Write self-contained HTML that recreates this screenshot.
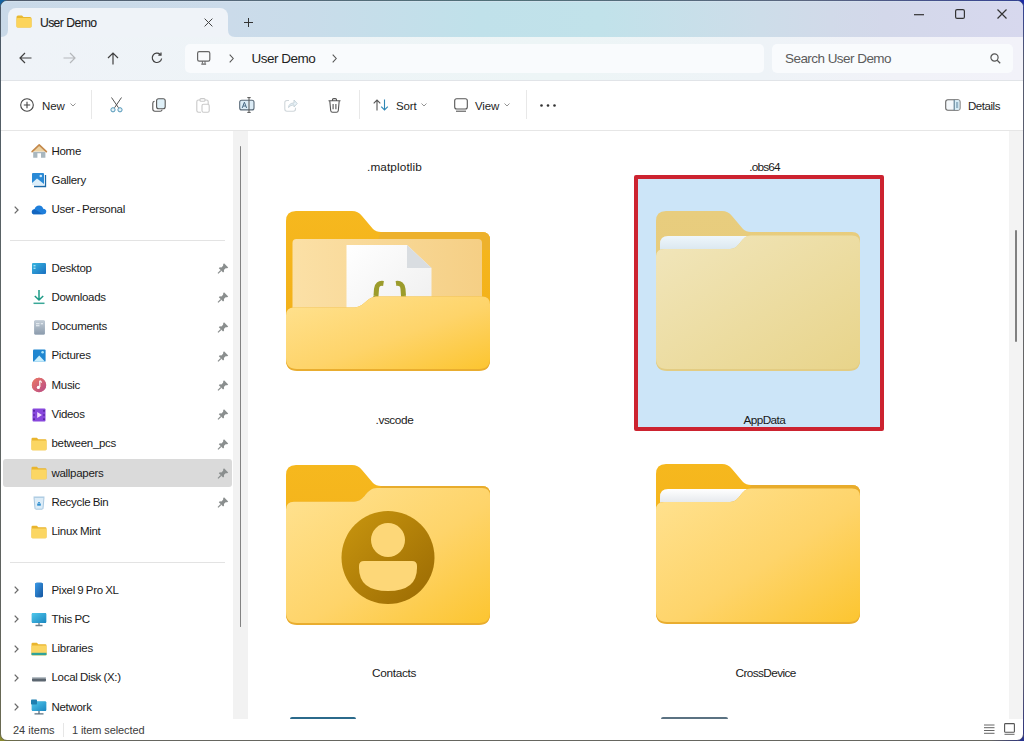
<!DOCTYPE html>
<html><head><meta charset="utf-8">
<style>
*{margin:0;padding:0;box-sizing:border-box}
html,body{width:1024px;height:741px;overflow:hidden;background:#fff;font-family:"Liberation Sans",sans-serif;color:#1b1b1b}
.a{position:absolute}
svg{position:absolute;overflow:visible}
#win{position:absolute;left:0;top:0;width:1024px;height:741px;overflow:hidden;background:#fff}
#title{left:0;top:0;width:1024px;height:37px;background:linear-gradient(90deg,#c9d9e8 0px,#cbdbea 230px,#c9dcea 300px,#c0e1ea 480px,#c1e2ea 600px,#cddde9 760px,#d1dae9 830px,#d3d8ea 885px,#d7d8ee 1024px)}
#tab{left:8px;top:8px;width:220px;height:30px;background:#eff3f8;border-radius:8px 8px 0 0}
#nav{left:0;top:37px;width:1024px;height:43px;background:linear-gradient(90deg,#eff3f8 0px,#eef4f7 300px,#edf5f6 560px,#eef3f7 760px,#f1f2f8 900px,#f2f2f9 1024px)}
#addr{left:184.5px;top:44px;width:579.5px;height:29px;background:#f9fbfd;border-radius:5px}
#search{left:772px;top:44px;width:241px;height:29px;background:#f9fbfd;border-radius:5px}
#cmd{left:0;top:80px;width:1024px;height:51px;background:#fff;border-top:1px solid #e1e4e8;border-bottom:1px solid #e6e6e6}
.t{position:absolute;white-space:nowrap;line-height:1}
.sb{font-size:11.5px;letter-spacing:-0.3px;word-spacing:-0.5px;color:#1a1a1a}
.lbl{font-size:11.8px;color:#1a1a1a}
.sep{position:absolute;width:1px;background:#e8e8e8}
.bd{position:absolute;background:#4f5a64}
</style></head><body>
<div id="win">
  <div id="title" class="a"></div>
  <div id="tab" class="a"></div>
  <svg style="left:228px;top:30px" width="8" height="7" viewBox="0 0 8 7"><path d="M0 0 V7 H7 Q0 7 0 0 Z" fill="#eff3f8"/></svg>
  <svg style="left:0px;top:30px" width="8" height="7" viewBox="0 0 8 7"><path d="M8 0 V7 H1 Q8 7 8 0 Z" fill="#eff3f8"/></svg>
  <!-- tab folder icon -->
  <svg style="left:16px;top:15px" width="16" height="13" viewBox="0 0 16 13">
    <path d="M0.5 2 Q0.5 0.5 2 0.5 H6 L7.5 2 H14 Q15.5 2 15.5 3.5 V11.5 Q15.5 12.5 14 12.5 H2 Q0.5 12.5 0.5 11 Z" fill="#e8b830"/>
    <path d="M0.5 4 Q0.5 3 2 3 H14 Q15.5 3 15.5 4.5 V11.2 Q15.5 12.5 14 12.5 H2 Q0.5 12.5 0.5 11.2 Z" fill="#fcd45a"/>
  </svg>
  <div class="t" style="left:40px;top:16.8px;font-size:12.2px;letter-spacing:-0.65px;word-spacing:0.5px;color:#1a1a1a;-webkit-text-stroke:0.1px #1a1a1a">User Demo</div>
  <svg style="left:204px;top:18px" width="9" height="9" viewBox="0 0 9 9"><path d="M0.6 0.6 L8.4 8.4 M8.4 0.6 L0.6 8.4" stroke="#444" stroke-width="1"/></svg>
  <svg style="left:244px;top:18px" width="9" height="9" viewBox="0 0 9 9"><path d="M4.5 0 V9 M0 4.5 H9" stroke="#333" stroke-width="1"/></svg>
  <!-- window controls -->
  <svg style="left:914px;top:13.5px" width="10" height="2" viewBox="0 0 10 2"><path d="M0 0.7 H10" stroke="#333" stroke-width="1.2"/></svg>
  <svg style="left:955px;top:9px" width="10" height="10" viewBox="0 0 10 10"><rect x="0.6" y="0.6" width="8.8" height="8.8" rx="1.5" fill="none" stroke="#333" stroke-width="1.2"/></svg>
  <svg style="left:997px;top:9px" width="10" height="10" viewBox="0 0 10 10"><path d="M0.5 0.5 L9.5 9.5 M9.5 0.5 L0.5 9.5" stroke="#333" stroke-width="1.2"/></svg>

  <div id="nav" class="a"></div>
  <div id="addr" class="a"></div>
  <div id="search" class="a"></div>
  <!-- nav buttons -->
  <svg style="left:19px;top:52px" width="13" height="12" viewBox="0 0 13 12"><path d="M12.5 6 H1 M6 1 L1 6 L6 11" fill="none" stroke="#404040" stroke-width="1.2"/></svg>
  <svg style="left:63px;top:52px" width="13" height="12" viewBox="0 0 13 12"><path d="M0.5 6 H12 M7 1 L12 6 L7 11" fill="none" stroke="#b5b8bb" stroke-width="1.2"/></svg>
  <svg style="left:107px;top:52px" width="12" height="13" viewBox="0 0 12 13"><path d="M6 12.5 V1 M1 6 L6 1 L11 6" fill="none" stroke="#404040" stroke-width="1.2"/></svg>
  <svg style="left:151px;top:52px" width="12" height="12" viewBox="0 0 12 12"><path d="M10.6 6.5 A4.7 4.7 0 1 1 9.2 2.4 M10 0.5 V3.2 H7.3" fill="none" stroke="#404040" stroke-width="1.2"/></svg>
  <!-- address content -->
  <svg style="left:197px;top:51px" width="14" height="14" viewBox="0 0 14 14"><rect x="0.6" y="0.6" width="12.2" height="9.6" rx="1.6" fill="none" stroke="#666" stroke-width="1.2"/><path d="M4.3 13.1 H9.1" stroke="#666" stroke-width="1.3"/><path d="M5.4 10.2 V12.6 M8 10.2 V12.6" stroke="#666" stroke-width="1"/></svg>
  <svg style="left:229px;top:54px" width="5" height="9" viewBox="0 0 5 9"><path d="M0.7 0.7 L4.2 4.5 L0.7 8.3" fill="none" stroke="#555" stroke-width="1.1"/></svg>
  <div class="t" style="left:251.5px;top:51.9px;font-size:13.5px;letter-spacing:-0.5px;word-spacing:0px;color:#1f1f1f">User Demo</div>
  <svg style="left:332px;top:54px" width="5" height="9" viewBox="0 0 5 9"><path d="M0.7 0.7 L4.2 4.5 L0.7 8.3" fill="none" stroke="#555" stroke-width="1.1"/></svg>
  <div class="t" style="left:785px;top:52.4px;font-size:13.5px;letter-spacing:-0.55px;word-spacing:0px;color:#5c5c5c">Search User Demo</div>
  <svg style="left:990px;top:53px" width="11" height="11" viewBox="0 0 11 11"><circle cx="4.5" cy="4.5" r="3.6" fill="none" stroke="#555" stroke-width="1.2"/><path d="M7.2 7.2 L10.2 10.2" stroke="#555" stroke-width="1.3"/></svg>

  <div id="cmd" class="a"></div>
  <!-- command bar -->
  <svg style="left:20px;top:98px" width="14" height="14" viewBox="0 0 14 14"><circle cx="7" cy="7" r="6.3" fill="none" stroke="#444" stroke-width="1.1"/><path d="M7 3.8 V10.2 M3.8 7 H10.2" stroke="#444" stroke-width="1.1"/></svg>
  <div class="t" style="left:42px;top:100.8px;font-size:11.5px;letter-spacing:-0.1px;color:#1f1f1f">New</div>
  <svg style="left:70px;top:103px" width="6" height="4" viewBox="0 0 6 4"><path d="M0.5 0.5 L3 3 L5.5 0.5" fill="none" stroke="#888" stroke-width="0.9"/></svg>
  <div class="sep" style="left:91px;top:90px;height:29px"></div>
  <!-- cut -->
  <svg style="left:110px;top:97px" width="13" height="16" viewBox="0 0 13 16"><path d="M1.5 0.5 L8.5 10.8 M11.5 0.5 L4.5 10.8" stroke="#555" stroke-width="1" fill="none"/><circle cx="3" cy="12.8" r="2.1" fill="#e6f2f8" stroke="#5096b8" stroke-width="1"/><circle cx="10" cy="12.8" r="2.1" fill="#e6f2f8" stroke="#5096b8" stroke-width="1"/></svg>
  <!-- copy -->
  <svg style="left:152px;top:98px" width="14" height="14" viewBox="0 0 14 14"><path d="M2.5 3.2 Q0.8 3.5 0.8 5.2 V11 Q0.8 13.2 3 13.2 H8.2 Q9.8 13.2 10.2 11.6" fill="none" stroke="#555" stroke-width="1.1"/><rect x="4.6" y="0.7" width="8.6" height="10" rx="2" fill="#dff0f8" stroke="#555" stroke-width="1.1"/></svg>
  <!-- paste disabled -->
  <svg style="left:196px;top:98px" width="14" height="15" viewBox="0 0 14 15"><path d="M4 2 H2.5 Q0.8 2 0.8 3.8 V12.5 Q0.8 14.2 2.5 14.2 H5" fill="none" stroke="#c9c9c9" stroke-width="1.1"/><rect x="4" y="0.6" width="5" height="2.6" rx="1" fill="none" stroke="#c9c9c9" stroke-width="1.1"/><path d="M9 2 H10.5 Q12.2 2 12.2 3.8 V6" fill="none" stroke="#c9c9c9" stroke-width="1.1"/><rect x="6" y="6.2" width="7.2" height="8" rx="1.5" fill="none" stroke="#c9c9c9" stroke-width="1.1"/></svg>
  <!-- rename -->
  <svg style="left:239px;top:97px" width="16" height="16" viewBox="0 0 16 16"><rect x="0.7" y="3.3" width="14.3" height="9.6" rx="2" fill="#dcecf6" stroke="#5a6a78" stroke-width="1.1"/><path d="M3.2 11 L5.4 5.2 L7.6 11 M4 9 H6.8" fill="none" stroke="#4a6b85" stroke-width="1"/><path d="M10 0.6 V15.4 M8.3 0.6 H11.7 M8.3 15.4 H11.7" stroke="#555" stroke-width="1"/></svg>
  <!-- share disabled -->
  <svg style="left:284px;top:99px" width="14" height="13" viewBox="0 0 14 13"><path d="M5 1.5 H3 Q0.8 1.5 0.8 3.7 V10 Q0.8 12.2 3 12.2 H9.3 Q11.5 12.2 11.5 10 V8.8" fill="none" stroke="#cfd6da" stroke-width="1.1"/><path d="M4.5 8.5 Q5 4 10 4 V1 L13.2 4.5 L10 8 V5.8 Q6.5 5.8 4.5 8.5 Z" fill="#e8f2f8" stroke="#c8d4da" stroke-width="1"/></svg>
  <!-- delete -->
  <svg style="left:328px;top:98px" width="13" height="15" viewBox="0 0 13 15"><path d="M0.5 2.8 H12.5 M4.5 2.8 V1.8 Q4.5 0.6 5.7 0.6 H7.3 Q8.5 0.6 8.5 1.8 V2.8" fill="none" stroke="#555" stroke-width="1.1"/><path d="M1.8 3 L2.7 12.5 Q2.9 14.3 4.6 14.3 H8.4 Q10.1 14.3 10.3 12.5 L11.2 3" fill="none" stroke="#555" stroke-width="1.1"/><path d="M5.1 6 V11.2 M7.9 6 V11.2" stroke="#555" stroke-width="1.1"/></svg>
  <div class="sep" style="left:359px;top:90px;height:29px"></div>
  <!-- sort -->
  <svg style="left:373px;top:99px" width="16" height="12" viewBox="0 0 16 12"><path d="M4 11.5 V1 M0.7 4.3 L4 1 L7.3 4.3" fill="none" stroke="#555" stroke-width="1.1"/><path d="M11.5 0.5 V11 M8.2 7.7 L11.5 11 L14.8 7.7" fill="none" stroke="#2f87b5" stroke-width="1.1"/></svg>
  <div class="t" style="left:396px;top:100.8px;font-size:11.5px;letter-spacing:-0.1px;color:#1f1f1f">Sort</div>
  <svg style="left:421px;top:103px" width="6" height="4" viewBox="0 0 6 4"><path d="M0.5 0.5 L3 3 L5.5 0.5" fill="none" stroke="#888" stroke-width="0.9"/></svg>
  <!-- view -->
  <svg style="left:454px;top:98px" width="14" height="14" viewBox="0 0 14 14"><rect x="0.7" y="0.7" width="12.6" height="10.3" rx="2" fill="none" stroke="#555" stroke-width="1.1"/><path d="M2 13.2 H12" stroke="#555" stroke-width="1.1"/></svg>
  <div class="t" style="left:475px;top:100.8px;font-size:11.5px;letter-spacing:-0.1px;color:#1f1f1f">View</div>
  <svg style="left:504px;top:103px" width="6" height="4" viewBox="0 0 6 4"><path d="M0.5 0.5 L3 3 L5.5 0.5" fill="none" stroke="#888" stroke-width="0.9"/></svg>
  <div class="sep" style="left:526px;top:90px;height:29px"></div>
  <svg style="left:540px;top:104px" width="16" height="3" viewBox="0 0 16 3"><circle cx="1.5" cy="1.5" r="1.3" fill="#333"/><circle cx="8" cy="1.5" r="1.3" fill="#333"/><circle cx="14.5" cy="1.5" r="1.3" fill="#333"/></svg>
  <!-- details -->
  <svg style="left:945px;top:99px" width="16" height="12" viewBox="0 0 16 12"><rect x="0.7" y="0.7" width="14.3" height="10.6" rx="2.2" fill="#f4f8fb" stroke="#666" stroke-width="1.1"/><rect x="9.2" y="1.2" width="5.3" height="9.6" fill="#d6ecf6"/><path d="M9.2 0.7 V11.3" stroke="#5b7d90" stroke-width="1.1"/><path d="M11 4 H13.2 M11 6 H13.2 M11 8 H13.2" stroke="#4a7590" stroke-width="0.9"/></svg>
  <div class="t" style="left:968px;top:100.8px;font-size:11.5px;letter-spacing:-0.45px;color:#1f1f1f">Details</div>
<svg width="0" height="0" style="left:0;top:0"><defs><linearGradient id="gd" x1="0" y1="0" x2="1" y2="1"><stop offset="0" stop-color="#38b6e0"/><stop offset="1" stop-color="#1a6fc0"/></linearGradient><linearGradient id="gdoc" x1="0" y1="0" x2="0" y2="1"><stop offset="0" stop-color="#c2ccd6"/><stop offset="1" stop-color="#8c9cad"/></linearGradient><linearGradient id="gmus" x1="0" y1="0" x2="1" y2="1"><stop offset="0" stop-color="#ee7a62"/><stop offset="1" stop-color="#b54a8a"/></linearGradient><linearGradient id="gph" x1="0" y1="0" x2="1" y2="1"><stop offset="0" stop-color="#3b9be8"/><stop offset="1" stop-color="#14559e"/></linearGradient><linearGradient id="gpc" x1="0" y1="0" x2="1" y2="1"><stop offset="0" stop-color="#50c8ec"/><stop offset="1" stop-color="#1a86c0"/></linearGradient></defs></svg>
<div class="a" style="left:233px;top:131px;width:15px;height:588px;background:#f2f2f2"></div>
<div class="a" style="left:239.7px;top:146px;width:1.6px;height:481px;background:#828282;border-radius:1px"></div>
<div class="a" style="left:3px;top:459.0px;width:229px;height:28px;background:#dadada;border-radius:3px"></div>
<svg style="left:31px;top:143.1px" width="16" height="16" viewBox="0 0 16 16"><path d="M2.2 8.8 H14.4 V14.8 H10 V10.2 H6.4 V14.8 H2.2 Z" fill="#a9b7bf"/><path d="M1.8 8.6 L8.2 2.6 L14.6 8.6 Z" fill="#ecd2a2"/><path d="M1.1 8.6 L8.2 1.8 L15.4 8.6" fill="none" stroke="#c4884a" stroke-width="1.6" stroke-linejoin="round" stroke-linecap="round"/></svg>
<div class="t sb" style="left:51.5px;top:145.5px">Home</div>
<svg style="left:31px;top:172.4px" width="16" height="16" viewBox="0 0 16 16"><rect x="1" y="1" width="12" height="12" rx="1" fill="#2a8ad6"/><path d="M1 11 L6 6.5 L13 12 V13 H1 Z" fill="#dbeefa"/><circle cx="9.8" cy="4" r="1.3" fill="#cfe9fa"/><path d="M14.5 3 V14.5 H3" fill="none" stroke="#1c6aa8" stroke-width="1.3"/></svg>
<div class="t sb" style="left:51.5px;top:174.8px">Gallery</div>
<svg style="left:31px;top:201.6px" width="16" height="16" viewBox="0 0 16 16"><path d="M3.5 12.2 Q0.6 12.2 0.8 9.4 Q1.1 7.2 3.6 7.1 Q4.6 3.6 8.1 3.6 Q11.2 3.6 12.2 6.7 Q15.4 7 15.3 9.7 Q15.1 12.2 12.5 12.2 Z" fill="#1f7fdb"/><path d="M3.5 12.2 Q0.6 12.2 0.8 9.4 Q1.1 7.7 3.3 7.4 Q6 8.2 8 9.7 Q10 11.2 12.5 12.2 Z" fill="#1366c0"/></svg>
<div class="t sb" style="left:51.5px;top:204.0px;word-spacing:-1px">User - Personal</div>
<svg style="left:14px;top:205.6px" width="5" height="8" viewBox="0 0 5 8"><path d="M0.7 0.6 L4 4 L0.7 7.4" fill="none" stroke="#6a6a6a" stroke-width="1.3"/></svg>
<svg style="left:31px;top:260.2px" width="16" height="16" viewBox="0 0 16 16"><rect x="1" y="3" width="14" height="11" rx="1.5" fill="#1e88c8"/><rect x="1" y="3" width="14" height="11" rx="1.5" fill="url(#gd)"/><rect x="2.5" y="5" width="2" height="1.4" fill="#9fe0f5"/><rect x="2.5" y="7.6" width="2" height="1.4" fill="#9fe0f5"/></svg>
<div class="t sb" style="left:51.5px;top:262.6px">Desktop</div>
<svg style="left:217.3px;top:262.0px" width="12" height="12" viewBox="0 0 12 12"><path d="M7 1.2 L11.2 5.4 L10.2 6.2 L8.6 6.3 L6.9 8 L7.1 9.6 L6.1 10.6 L1.8 6.3 L2.8 5.3 L4.4 5.5 L6.1 3.8 L6.2 2.2 Z" fill="#8a8e8e"/><path d="M3.9 8.5 L1 11.4" stroke="#8a8e8e" stroke-width="1.2"/></svg>
<svg style="left:31px;top:289.4px" width="16" height="16" viewBox="0 0 16 16"><path d="M8 1 V11 M3.8 7 L8 11 L12.2 7" fill="none" stroke="#1d9a86" stroke-width="1.5"/><path d="M2.5 14.3 H13.5" stroke="#3aa898" stroke-width="1.5"/></svg>
<div class="t sb" style="left:51.5px;top:291.8px">Downloads</div>
<svg style="left:217.3px;top:291.2px" width="12" height="12" viewBox="0 0 12 12"><path d="M7 1.2 L11.2 5.4 L10.2 6.2 L8.6 6.3 L6.9 8 L7.1 9.6 L6.1 10.6 L1.8 6.3 L2.8 5.3 L4.4 5.5 L6.1 3.8 L6.2 2.2 Z" fill="#8a8e8e"/><path d="M3.9 8.5 L1 11.4" stroke="#8a8e8e" stroke-width="1.2"/></svg>
<svg style="left:31px;top:318.7px" width="16" height="16" viewBox="0 0 16 16"><rect x="3.3" y="1.6" width="10.5" height="13.8" rx="1" fill="#a3b2c2"/><rect x="3.3" y="1.6" width="10.5" height="13.8" rx="1" fill="url(#gdoc)"/><path d="M5 4.8 H8.5 M9.8 4.8 H12 M5 6.8 H8.5" stroke="#eef3f7" stroke-width="1.1"/></svg>
<div class="t sb" style="left:51.5px;top:321.1px">Documents</div>
<svg style="left:217.3px;top:320.5px" width="12" height="12" viewBox="0 0 12 12"><path d="M7 1.2 L11.2 5.4 L10.2 6.2 L8.6 6.3 L6.9 8 L7.1 9.6 L6.1 10.6 L1.8 6.3 L2.8 5.3 L4.4 5.5 L6.1 3.8 L6.2 2.2 Z" fill="#8a8e8e"/><path d="M3.9 8.5 L1 11.4" stroke="#8a8e8e" stroke-width="1.2"/></svg>
<svg style="left:31px;top:348.0px" width="16" height="16" viewBox="0 0 16 16"><rect x="2" y="1.6" width="12.6" height="12.2" rx="1" fill="#1f86d0"/><path d="M2.5 13.8 L8.2 7.6 L14.1 13.8 Z" fill="#c9eefc"/><circle cx="11.6" cy="4.2" r="1.3" fill="#a8e4fa"/></svg>
<div class="t sb" style="left:51.5px;top:350.4px">Pictures</div>
<svg style="left:217.3px;top:349.8px" width="12" height="12" viewBox="0 0 12 12"><path d="M7 1.2 L11.2 5.4 L10.2 6.2 L8.6 6.3 L6.9 8 L7.1 9.6 L6.1 10.6 L1.8 6.3 L2.8 5.3 L4.4 5.5 L6.1 3.8 L6.2 2.2 Z" fill="#8a8e8e"/><path d="M3.9 8.5 L1 11.4" stroke="#8a8e8e" stroke-width="1.2"/></svg>
<svg style="left:31px;top:377.3px" width="16" height="16" viewBox="0 0 16 16"><circle cx="8" cy="8" r="7.2" fill="#d7606a"/><circle cx="8" cy="8" r="7.2" fill="url(#gmus)"/><path d="M8.8 3.8 V10" stroke="#fff" stroke-width="1.2"/><circle cx="7.4" cy="10.4" r="1.6" fill="#fff"/><path d="M8.8 3.8 Q10.3 4.2 10.5 5.8" fill="none" stroke="#fff" stroke-width="1.1"/></svg>
<div class="t sb" style="left:51.5px;top:379.7px">Music</div>
<svg style="left:217.3px;top:379.1px" width="12" height="12" viewBox="0 0 12 12"><path d="M7 1.2 L11.2 5.4 L10.2 6.2 L8.6 6.3 L6.9 8 L7.1 9.6 L6.1 10.6 L1.8 6.3 L2.8 5.3 L4.4 5.5 L6.1 3.8 L6.2 2.2 Z" fill="#8a8e8e"/><path d="M3.9 8.5 L1 11.4" stroke="#8a8e8e" stroke-width="1.2"/></svg>
<svg style="left:31px;top:406.5px" width="16" height="16" viewBox="0 0 16 16"><rect x="1.5" y="1.5" width="13" height="13" rx="1" fill="#8747dc"/><path d="M6.2 5 L11 8 L6.2 11 Z" fill="#f2dcff"/><path d="M3 3.3 V4.5 M3 7.4 V8.6 M3 11.5 V12.7 M13 3.3 V4.5 M13 7.4 V8.6 M13 11.5 V12.7" stroke="#3c1480" stroke-width="1.6"/></svg>
<div class="t sb" style="left:51.5px;top:408.9px">Videos</div>
<svg style="left:217.3px;top:408.3px" width="12" height="12" viewBox="0 0 12 12"><path d="M7 1.2 L11.2 5.4 L10.2 6.2 L8.6 6.3 L6.9 8 L7.1 9.6 L6.1 10.6 L1.8 6.3 L2.8 5.3 L4.4 5.5 L6.1 3.8 L6.2 2.2 Z" fill="#8a8e8e"/><path d="M3.9 8.5 L1 11.4" stroke="#8a8e8e" stroke-width="1.2"/></svg>
<svg style="left:31px;top:435.8px" width="16" height="16" viewBox="0 0 16 16"><path d="M0.5 3 Q0.5 1.8 1.7 1.8 H5.8 L7.3 3.2 H14.3 Q15.5 3.2 15.5 4.4 V13 Q15.5 14.2 14.3 14.2 H1.7 Q0.5 14.2 0.5 13 Z" fill="#e9b52e"/><path d="M0.5 5.3 Q0.5 4.5 1.5 4.5 H14.5 Q15.5 4.5 15.5 5.5 V13 Q15.5 14.2 14.3 14.2 H1.7 Q0.5 14.2 0.5 13 Z" fill="#fbd663"/></svg>
<div class="t sb" style="left:51.5px;top:438.2px">between_pcs</div>
<svg style="left:217.3px;top:437.6px" width="12" height="12" viewBox="0 0 12 12"><path d="M7 1.2 L11.2 5.4 L10.2 6.2 L8.6 6.3 L6.9 8 L7.1 9.6 L6.1 10.6 L1.8 6.3 L2.8 5.3 L4.4 5.5 L6.1 3.8 L6.2 2.2 Z" fill="#8a8e8e"/><path d="M3.9 8.5 L1 11.4" stroke="#8a8e8e" stroke-width="1.2"/></svg>
<svg style="left:31px;top:465.1px" width="16" height="16" viewBox="0 0 16 16"><path d="M0.5 3 Q0.5 1.8 1.7 1.8 H5.8 L7.3 3.2 H14.3 Q15.5 3.2 15.5 4.4 V13 Q15.5 14.2 14.3 14.2 H1.7 Q0.5 14.2 0.5 13 Z" fill="#e9b52e"/><path d="M0.5 5.3 Q0.5 4.5 1.5 4.5 H14.5 Q15.5 4.5 15.5 5.5 V13 Q15.5 14.2 14.3 14.2 H1.7 Q0.5 14.2 0.5 13 Z" fill="#fbd663"/></svg>
<div class="t sb" style="left:51.5px;top:467.5px">wallpapers</div>
<svg style="left:217.3px;top:466.9px" width="12" height="12" viewBox="0 0 12 12"><path d="M7 1.2 L11.2 5.4 L10.2 6.2 L8.6 6.3 L6.9 8 L7.1 9.6 L6.1 10.6 L1.8 6.3 L2.8 5.3 L4.4 5.5 L6.1 3.8 L6.2 2.2 Z" fill="#8a8e8e"/><path d="M3.9 8.5 L1 11.4" stroke="#8a8e8e" stroke-width="1.2"/></svg>
<svg style="left:31px;top:494.3px" width="16" height="16" viewBox="0 0 16 16"><path d="M3 3.5 H13 L12 14.5 Q11.8 15.2 11 15.2 H5 Q4.2 15.2 4 14.5 Z" fill="#dcecf7" stroke="#9fc2dc" stroke-width="0.9"/><path d="M2.5 3 H13.5" stroke="#b8d3e6" stroke-width="1.2"/><path d="M6.5 10.5 L8 8 L9.5 10.5 Z M6.2 11.2 H9.8" fill="none" stroke="#2f8fd0" stroke-width="1"/></svg>
<div class="t sb" style="left:51.5px;top:496.7px">Recycle Bin</div>
<svg style="left:217.3px;top:496.1px" width="12" height="12" viewBox="0 0 12 12"><path d="M7 1.2 L11.2 5.4 L10.2 6.2 L8.6 6.3 L6.9 8 L7.1 9.6 L6.1 10.6 L1.8 6.3 L2.8 5.3 L4.4 5.5 L6.1 3.8 L6.2 2.2 Z" fill="#8a8e8e"/><path d="M3.9 8.5 L1 11.4" stroke="#8a8e8e" stroke-width="1.2"/></svg>
<svg style="left:31px;top:523.6px" width="16" height="16" viewBox="0 0 16 16"><path d="M0.5 3 Q0.5 1.8 1.7 1.8 H5.8 L7.3 3.2 H14.3 Q15.5 3.2 15.5 4.4 V13 Q15.5 14.2 14.3 14.2 H1.7 Q0.5 14.2 0.5 13 Z" fill="#e9b52e"/><path d="M0.5 5.3 Q0.5 4.5 1.5 4.5 H14.5 Q15.5 4.5 15.5 5.5 V13 Q15.5 14.2 14.3 14.2 H1.7 Q0.5 14.2 0.5 13 Z" fill="#fbd663"/></svg>
<div class="t sb" style="left:51.5px;top:526.0px">Linux Mint</div>
<svg style="left:31px;top:582.1px" width="16" height="16" viewBox="0 0 16 16"><rect x="4" y="0.8" width="8" height="14.4" rx="1.6" fill="#1b6fc2"/><rect x="4" y="0.8" width="8" height="14.4" rx="1.6" fill="url(#gph)"/></svg>
<div class="t sb" style="left:51.5px;top:584.5px">Pixel 9 Pro XL</div>
<svg style="left:14px;top:586.1px" width="5" height="8" viewBox="0 0 5 8"><path d="M0.7 0.6 L4 4 L0.7 7.4" fill="none" stroke="#6a6a6a" stroke-width="1.3"/></svg>
<svg style="left:31px;top:611.4px" width="16" height="16" viewBox="0 0 16 16"><rect x="0.8" y="2" width="14.4" height="10" rx="1" fill="#28a8d8"/><rect x="0.8" y="2" width="14.4" height="10" rx="1" fill="url(#gpc)"/><path d="M8 12 V14 M4.5 14.5 H11.5" stroke="#6a7d8a" stroke-width="1.3"/></svg>
<div class="t sb" style="left:51.5px;top:613.8px">This PC</div>
<svg style="left:14px;top:615.4px" width="5" height="8" viewBox="0 0 5 8"><path d="M0.7 0.6 L4 4 L0.7 7.4" fill="none" stroke="#6a6a6a" stroke-width="1.3"/></svg>
<svg style="left:31px;top:640.7px" width="16" height="16" viewBox="0 0 16 16"><path d="M0.5 3 Q0.5 1.8 1.7 1.8 H5.8 L7.3 3.2 H14.3 Q15.5 3.2 15.5 4.4 V13 Q15.5 14.2 14.3 14.2 H1.7 Q0.5 14.2 0.5 13 Z" fill="#e9b52e"/><path d="M0.5 5.3 Q0.5 4.5 1.5 4.5 H14.5 Q15.5 4.5 15.5 5.5 V13 Q15.5 14.2 14.3 14.2 H1.7 Q0.5 14.2 0.5 13 Z" fill="#fbd663"/><rect x="0.5" y="11.8" width="15" height="2.4" fill="#2fa39a"/></svg>
<div class="t sb" style="left:51.5px;top:643.1px">Libraries</div>
<svg style="left:14px;top:644.7px" width="5" height="8" viewBox="0 0 5 8"><path d="M0.7 0.6 L4 4 L0.7 7.4" fill="none" stroke="#6a6a6a" stroke-width="1.3"/></svg>
<svg style="left:31px;top:670.0px" width="16" height="16" viewBox="0 0 16 16"><rect x="1" y="8" width="14" height="3.5" rx="1" fill="#5c6670"/><rect x="1" y="7" width="14" height="1.5" rx="0.5" fill="#b8c0c6"/></svg>
<div class="t sb" style="left:51.5px;top:672.4px">Local Disk (X:)</div>
<svg style="left:14px;top:674.0px" width="5" height="8" viewBox="0 0 5 8"><path d="M0.7 0.6 L4 4 L0.7 7.4" fill="none" stroke="#6a6a6a" stroke-width="1.3"/></svg>
<svg style="left:31px;top:699.2px" width="16" height="16" viewBox="0 0 16 16"><rect x="0.8" y="2.5" width="14.4" height="9.5" rx="1" fill="#2aa0c8"/><rect x="0.8" y="2.5" width="14.4" height="9.5" rx="1" fill="url(#gpc)"/><path d="M8 12 V14.5 M3.5 14.8 H12.5" stroke="#5a7080" stroke-width="1.3"/><rect x="0" y="0.5" width="6" height="5" rx="0.8" fill="#1d7fb0"/></svg>
<div class="t sb" style="left:51.5px;top:701.6px">Network</div>
<svg style="left:14px;top:703.2px" width="5" height="8" viewBox="0 0 5 8"><path d="M0.7 0.6 L4 4 L0.7 7.4" fill="none" stroke="#6a6a6a" stroke-width="1.3"/></svg>
<div class="a" style="left:10px;top:239.7px;width:215px;height:1px;background:#e3e3e3"></div>
<div class="a" style="left:10px;top:561.7px;width:215px;height:1px;background:#e3e3e3"></div>
  <!-- content area -->
  <svg width="0" height="0" style="left:0;top:0"><defs>
    <linearGradient id="ftab" x1="0" y1="0" x2="0" y2="1"><stop offset="0" stop-color="#f6b81e"/><stop offset="1" stop-color="#f1ad17"/></linearGradient>
    <linearGradient id="ffront" x1="0" y1="0" x2="1" y2="1"><stop offset="0" stop-color="#ffe291"/><stop offset="0.55" stop-color="#fed46a"/><stop offset="1" stop-color="#fcc530"/></linearGradient>
    <linearGradient id="fpaper" x1="0" y1="0" x2="0" y2="1"><stop offset="0" stop-color="#ffffff"/><stop offset="1" stop-color="#dde2e7"/></linearGradient>
    <linearGradient id="finner" x1="0" y1="0" x2="1" y2="0"><stop offset="0" stop-color="#fbe0a6"/><stop offset="1" stop-color="#f5cf85"/></linearGradient>
    <linearGradient id="fdoc" x1="0" y1="0" x2="1" y2="1"><stop offset="0" stop-color="#ffffff"/><stop offset="1" stop-color="#eeeeee"/></linearGradient>
    <linearGradient id="fperson" x1="0" y1="0" x2="1" y2="1"><stop offset="0" stop-color="#c9960f"/><stop offset="1" stop-color="#9a6a03"/></linearGradient>
    <linearGradient id="htab" x1="0" y1="0" x2="0" y2="1"><stop offset="0" stop-color="#e8cd7e"/><stop offset="1" stop-color="#e6ca7a"/></linearGradient>
    <linearGradient id="hfront" x1="0" y1="0" x2="1" y2="1"><stop offset="0" stop-color="#f1e6bc"/><stop offset="1" stop-color="#e8d48a"/></linearGradient>
    <linearGradient id="hpaper" x1="0" y1="0" x2="0" y2="1"><stop offset="0" stop-color="#eef6fb"/><stop offset="1" stop-color="#d5e3ec"/></linearGradient>
  </defs></svg>

  <!-- scrollbar right -->
  <div class="a" style="left:1009px;top:131px;width:14px;height:588px;background:#f3f3f3"></div>
  <div class="a" style="left:1015px;top:230px;width:1.6px;height:112px;background:#808080;border-radius:1px"></div>

  <!-- labels of previous row -->
  <div class="t lbl" style="left:367px;top:162px;letter-spacing:0.1px">.matplotlib</div>
  <div class="t lbl" style="left:749.2px;top:162px;letter-spacing:-0.8px">.obs64</div>

  <!-- selection -->
  <div class="a" style="left:634px;top:174.7px;width:250px;height:256px;background:#cce5f8;border:4px solid #cc2330;border-radius:2px"></div>

  <!-- folder 1: open folder with doc -->
  <svg style="left:286px;top:209.5px" width="205" height="162" viewBox="0 0 205 162">
    <path d="M0 11 Q0 1 10 1 H66 Q72 1 76 6 L87 19 Q90 22 95 22 H196 Q204 22 204 30 V150 Q204 160 194 160 H10 Q0 160 0 150 Z" fill="url(#ftab)"/>
    <path d="M95 22 H196 Q204 22 204 30 V40 H88 Z" fill="#edb12c"/>
    <rect x="6.5" y="29" width="189.5" height="80" rx="4" fill="url(#finner)"/>
    <path d="M60.5 35 H121 L145.5 58 V110 H60.5 Z" fill="url(#fdoc)"/>
    <path d="M121 35 V58 H145.5 Z" fill="#d9dde1"/>
    <path d="M97.5 73.5 Q91 72.5 90.5 79 L90 86 Q89.5 91 84 94" fill="none" stroke="#9c9c2c" stroke-width="5"/>
    <path d="M110 73.5 Q116.5 72.5 117 79 L117.5 86 Q118 91 123 94" fill="none" stroke="#9c9c2c" stroke-width="5"/>
    <path d="M0 105.5 Q0 97.5 8 97.5 H67 C79.5 97.5 79.5 86.5 92 86.5 H196 Q204 86.5 204 94.5 V150 Q204 161 193 161 H11 Q0 161 0 150 Z" fill="#e9ad2f"/>
    <path d="M0 105.5 Q0 97.5 8 97.5 H67 C79.5 97.5 79.5 86.5 92 86.5 H196 Q204 86.5 204 94.5 V148 Q204 159 193 159 H11 Q0 159 0 148 Z" fill="url(#ffront)"/>
  </svg>
  <div class="t lbl" style="left:375.5px;top:415.4px;letter-spacing:-0.4px">.vscode</div>

  <!-- AppData (hidden, faded) -->
  <svg style="left:656px;top:209.5px" width="205" height="162" viewBox="0 0 205 162">
    <path d="M0 11 Q0 1 10 1 H66 Q72 1 76 6 L87 19 Q90 22 95 22 H196 Q204 22 204 30 V150 Q204 160 194 160 H10 Q0 160 0 150 Z" fill="url(#htab)"/>
    <path d="M4 34 Q4 26 12 26 H100 V44 H4 Z" fill="url(#hpaper)"/>
    <path d="M0 47 Q0 39 8 39 H74 C84.5 39 84.5 25.5 95 25.5 H196 Q204 25.5 204 33.5 V150 Q204 161 193 161 H11 Q0 161 0 150 Z" fill="#e3cc82"/>
    <path d="M0 47 Q0 39 8 39 H74 C84.5 39 84.5 25.5 95 25.5 H196 Q204 25.5 204 33.5 V148 Q204 159 193 159 H11 Q0 159 0 148 Z" fill="url(#hfront)"/>
  </svg>
  <div class="t lbl" style="left:743.5px;top:415px;letter-spacing:-0.6px">AppData</div>

  <!-- Contacts -->
  <svg style="left:285.5px;top:463.5px" width="205" height="162" viewBox="0 0 205 162">
    <path d="M0 11 Q0 1 10 1 H66 Q72 1 76 6 L87 19 Q90 22 95 22 H196 Q204 22 204 30 V150 Q204 160 194 160 H10 Q0 160 0 150 Z" fill="url(#ftab)"/>
    <path d="M95 22 H196 Q204 22 204 30 V40 H88 Z" fill="#e8ac2c"/>
    <path d="M0 45.7 Q0 37.7 8 37.7 H68 C79.5 37.7 79.5 24 91 24 H196 Q204 24 204 32 V150 Q204 161 193 161 H11 Q0 161 0 150 Z" fill="#e9ad2f"/>
    <path d="M0 45.7 Q0 37.7 8 37.7 H68 C79.5 37.7 79.5 24 91 24 H196 Q204 24 204 32 V148 Q204 159 193 159 H11 Q0 159 0 148 Z" fill="url(#ffront)"/>
    <circle cx="102" cy="93.5" r="46.5" fill="url(#fperson)"/>
    <circle cx="102" cy="76" r="17" fill="#fdd778"/>
    <path d="M78 97 H126 Q131 97 131 102 V104 Q131 127 102 127 Q73 127 73 104 V102 Q73 97 78 97 Z" fill="#fdd778"/>
  </svg>
  <div class="t lbl" style="left:372px;top:668px;letter-spacing:-0.3px">Contacts</div>

  <!-- CrossDevice -->
  <svg style="left:656px;top:463px" width="205" height="162" viewBox="0 0 205 162">
    <path d="M0 11 Q0 1 10 1 H66 Q72 1 76 6 L87 19 Q90 22 95 22 H196 Q204 22 204 30 V150 Q204 160 194 160 H10 Q0 160 0 150 Z" fill="url(#ftab)"/>
    <path d="M95 22 H196 Q204 22 204 30 V40 H88 Z" fill="#e8ac2c"/>
    <path d="M4 34 Q4 26 12 26 H100 V44 H4 Z" fill="url(#fpaper)"/>
    <path d="M0 47 Q0 39 8 39 H74 C84.5 39 84.5 25.5 95 25.5 H196 Q204 25.5 204 33.5 V150 Q204 161 193 161 H11 Q0 161 0 150 Z" fill="#e9ad2f"/>
    <path d="M0 47 Q0 39 8 39 H74 C84.5 39 84.5 25.5 95 25.5 H196 Q204 25.5 204 33.5 V148 Q204 159 193 159 H11 Q0 159 0 148 Z" fill="url(#ffront)"/>
  </svg>
  <div class="t lbl" style="left:735.5px;top:668px;letter-spacing:-0.6px">CrossDevice</div>

  <!-- peeking icons -->
  <div class="a" style="left:290px;top:717px;width:66px;height:3px;background:#2b6a8b;border-radius:2px 2px 0 0"></div>
  <div class="a" style="left:661px;top:717px;width:67px;height:3px;background:#5b7282;border-radius:2px 2px 0 0"></div>

  <!-- status bar -->
  <div class="a" style="left:0;top:719px;width:1024px;height:22px;background:#fff"></div>
  <div class="t" style="left:13px;top:724.6px;font-size:11px;color:#3c3c3c">24 items</div>
  <div class="sep" style="left:63px;top:723px;height:14px;background:#e6e6e6"></div>
  <div class="t" style="left:72px;top:724.6px;font-size:11px;letter-spacing:-0.1px;color:#3c3c3c">1 item selected</div>
  <svg style="left:984px;top:724px" width="11" height="10" viewBox="0 0 11 10"><path d="M0 1 H10.5 M0 3.7 H10.5 M0 6.5 H10.5 M0 9.3 H10.5" stroke="#666" stroke-width="1"/></svg>
  <svg style="left:1004px;top:723px" width="11" height="12" viewBox="0 0 11 12"><rect x="0.6" y="0.6" width="9.8" height="8.6" rx="0.8" fill="none" stroke="#555" stroke-width="1.1"/><path d="M0.5 11.3 H10.5" stroke="#666" stroke-width="1"/></svg>

  <!-- window border -->
  <div class="bd" style="left:0;top:1px;width:1024px;height:1px;background:#d6e2ee;opacity:0.7"></div>
  <div class="bd" style="left:0;top:0;width:1024px;height:1px;background:linear-gradient(90deg,#4f5a6a 0px,#56687a 206px,#507078 505px,#5a6680 806px,#3a4690 1000px,#2f3f90 1024px)"></div>
  <div class="bd" style="left:0;top:0;width:1px;height:741px;background:linear-gradient(180deg,#4b5866 0px,#5d6565 300px,#606360 600px,#6a6a50 741px)"></div>
  <div class="bd" style="left:1023px;top:0;width:1px;height:741px;background:linear-gradient(180deg,#2f3f98 0px,#555a70 60px,#666 380px,#5a5a70 680px,#2a3080 741px)"></div>
  <div class="bd" style="left:0;top:740px;width:1024px;height:1px;background:linear-gradient(90deg,#70703a 0px,#666660 30px,#666660 990px,#2a3080 1024px)"></div>
  <svg style="left:0;top:0" width="7" height="7" viewBox="0 0 7 7"><path d="M0 0 H7 V0.5 A6.5 6.5 0 0 0 0.5 7 H0 Z" fill="#1462a0"/><path d="M7 0.5 A6.5 6.5 0 0 0 0.5 7" fill="none" stroke="#4f6070" stroke-width="1"/><path d="M7 1.6 A5.4 5.4 0 0 0 1.6 7" fill="none" stroke="#c2e6fa" stroke-width="1"/></svg>
  <svg style="left:1017px;top:0" width="7" height="7" viewBox="0 0 7 7"><path d="M7 0 H0 V0.5 A6.5 6.5 0 0 1 6.5 7 H7 Z" fill="#1a2aa4"/><path d="M0 0.5 A6.5 6.5 0 0 1 6.5 7" fill="none" stroke="#44508a" stroke-width="1"/><path d="M0 1.6 A5.4 5.4 0 0 1 5.4 7" fill="none" stroke="#d8e0fa" stroke-width="1"/></svg>
  <svg style="left:0;top:734px" width="7" height="7" viewBox="0 0 7 7"><path d="M0 7 H7 V6.5 A6.5 6.5 0 0 1 0.5 0 H0 Z" fill="#8a8a2e"/><path d="M7 6.5 A6.5 6.5 0 0 1 0.5 0" fill="none" stroke="#6a6a50" stroke-width="1"/></svg>
  <svg style="left:1017px;top:734px" width="7" height="7" viewBox="0 0 7 7"><path d="M7 7 H0 V6.5 A6.5 6.5 0 0 0 6.5 0 H7 Z" fill="#26328e"/><path d="M0 6.5 A6.5 6.5 0 0 0 6.5 0" fill="none" stroke="#4a4a70" stroke-width="1"/></svg>
</div>
</body></html>
